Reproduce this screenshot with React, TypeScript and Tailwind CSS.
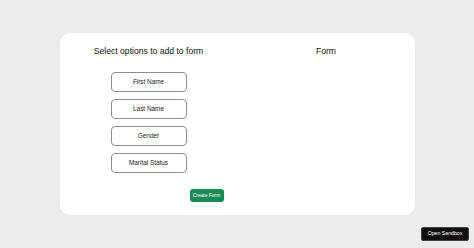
const options = ['First Name', 'Last Name', 'Gender', 'Marital Status'];

export default function App() {
  return (
    <div
      className="relative flex min-h-screen justify-center bg-[#ececec] pt-[33px]"
      style={{ fontFamily: '"Liberation Sans", Arial, sans-serif' }}
    >
      <div className="flex h-[182px] w-[355px] rounded-[10px] bg-white">
        <div className="flex w-[178px] flex-col items-center pt-[13px]">
          <h2 className="text-[8.6px] leading-[10px] text-[#111]">
            Select options to add to form
          </h2>
          <div className="mt-[16px] flex flex-col gap-[7px]">
            {options.map((opt) => (
              <button
                key={opt}
                className="flex h-[20px] w-[76px] items-center justify-center rounded-[4px] border border-[#8c8c8c] bg-white text-[6.4px] text-[#1a1a1a]"
              >
                {opt}
              </button>
            ))}
          </div>
          <button className="ml-[116px] mt-[16px] flex h-[13px] w-[34px] items-center justify-center rounded-[3px] bg-[#1c8a58] text-[4.9px] text-white">
            Create Form
          </button>
        </div>
        <div className="flex flex-1 flex-col items-center pt-[13px]">
          <h2 className="text-[8.6px] leading-[10px] text-[#111]">Form</h2>
        </div>
      </div>
      <button className="fixed bottom-[7px] right-[5px] flex h-[14px] w-[48px] items-center justify-center rounded-[2px] border border-[#444] bg-[#111] text-[5.2px] text-white">
        Open Sandbox
      </button>
    </div>
  );
}
